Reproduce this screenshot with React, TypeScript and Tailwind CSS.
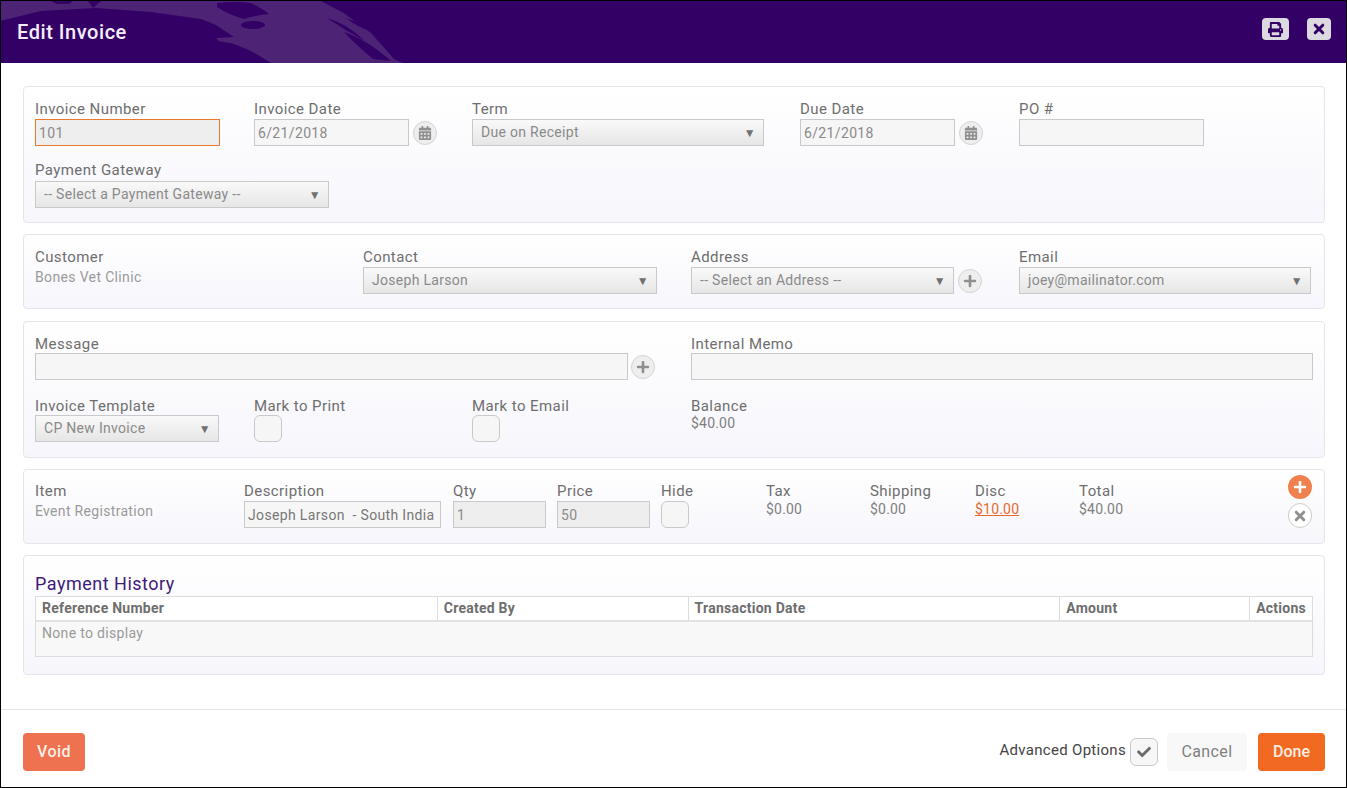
import { ReactNode } from 'react';
import { FaCalendarAlt, FaCheck, FaPlus, FaPrint } from 'react-icons/fa';

const inputClass = 'block h-[27px] border border-[#c9c9c9] px-[3px] text-[14px] tracking-[0.35px] outline-none';

function Label({ children, tight = false }: { children: ReactNode; tight?: boolean }) {
  return (
    <div
      className={`text-[15px] tracking-[0.42px] text-[#6e6e6e] ${
        tight ? 'h-5 leading-[22px]' : 'h-[21px] leading-[23px]'
      }`}
    >
      {children}
    </div>
  );
}

function Input({
  value = '',
  width,
  shade = 'bg-[#f6f6f6]',
  tone = 'text-[#8a8a8a]',
}: {
  value?: string;
  width: string;
  shade?: string;
  tone?: string;
}) {
  return <input readOnly value={value} className={`${inputClass} ${width} ${shade} ${tone}`} />;
}

function Select({ value, width }: { value: string; width: string }) {
  return (
    <div
      className={`flex h-[27px] items-center justify-between border border-[#c9c9c9] bg-gradient-to-b from-[#f9f9f9] to-[#e6e6e6] pl-2 pr-[7px] text-[14px] tracking-[0.3px] text-[#8a8a8a] ${width}`}
    >
      <span>{value}</span>
      <span className="text-[12px] text-[#707070]">▼</span>
    </div>
  );
}

function RoundIcon({ children, className = 'ml-1' }: { children: ReactNode; className?: string }) {
  return (
    <div
      className={`flex h-6 w-6 shrink-0 items-center justify-center rounded-full border border-[#d4d4d4] bg-[#eeeeee] text-[#8f8f8f] ${className}`}
    >
      {children}
    </div>
  );
}

function Panel({ height, className = '', children }: { height: string; className?: string; children: ReactNode }) {
  return (
    <section
      className={`rounded border border-[#e5e5ec] bg-gradient-to-b from-white to-[#f6f6fc] px-[11px] pt-[11px] ${height} ${className}`}
    >
      {children}
    </section>
  );
}

function Checkbox() {
  return <div className="h-[27px] w-[28px] rounded-md border border-[#c9c9c9] bg-[#f6f6f6]" />;
}

// the chunky close glyph, fa's own is too thin at this size
function CloseIcon({ size }: { size: number }) {
  return (
    <svg width={size} height={size} viewBox="0 0 12 12" fill="none" stroke="currentColor" strokeWidth="3">
      <path d="M2.2 2.2L9.8 9.8M9.8 2.2L2.2 9.8" strokeLinecap="round" />
    </svg>
  );
}

function ItemHead({ children }: { children: ReactNode }) {
  return <div className="h-5 text-[15px] leading-5 tracking-[0.42px] text-[#6e6e6e]">{children}</div>;
}

function ItemCol({ label, value, width }: { label: string; value: ReactNode; width: string }) {
  return (
    <div className={width}>
      <ItemHead>{label}</ItemHead>
      <div className="text-[14px] leading-4 tracking-[0.2px] text-[#808080]">{value}</div>
    </div>
  );
}

const historyColumns = [
  { name: 'Reference Number', width: 'w-[401px]' },
  { name: 'Created By', width: 'w-[251px]' },
  { name: 'Transaction Date', width: 'w-[372px]' },
  { name: 'Amount', width: 'w-[190px]' },
  { name: 'Actions', width: 'flex-1' },
];

export default function App() {
  return (
    <div className="flex h-[788px] w-[1347px] flex-col overflow-hidden border border-black bg-white font-['Roboto',sans-serif]">
      <header className="relative flex h-[62px] shrink-0 items-center justify-between overflow-hidden bg-[#330066] pl-4 pr-[15px]">
        <svg className="absolute left-0 top-0 blur-[0.4px]" width="420" height="62" viewBox="0 0 420 62">
          <path
            d="M-1 0H322L340 10L370 32L393 58L402 62H270L250 50L233 43L218 40L215 37L233 36L215 24L200 18L150 11L95 7L40 10L-1 20Z"
            fill="#4d2376"
          />
          <g fill="#330066">
            <path d="M50 0L72 0L68 3L56 3Z" />
            <path d="M87 0L100 0L92 7Z" />
            <path d="M216 2Q235 0 250 2Q262 8 268 13Q255 14 243 18Q228 14 216 6Z" />
            <ellipse cx="252" cy="24" rx="12" ry="4" />
            <path d="M320 0L340 0L341 11Z" />
            <path d="M326 17Q345 22 364 40Q345 30 326 17Z" />
            <path d="M343 31Q365 38 390 60L372 58Q355 44 343 31Z" />
            <path d="M345 17Q360 22 370 30Q356 26 345 17Z" />
          </g>
        </svg>
        <h1 className="relative text-[20px] font-medium tracking-[0.55px] text-[#f6eefc]">Edit Invoice</h1>
        <div className="relative mb-[6px] flex items-center gap-[18px]">
          <button className="flex h-[22px] w-[27px] items-center justify-center rounded bg-[#dcdae0] text-[15px] text-[#330066]">
            <FaPrint />
          </button>
          <button className="flex h-[22px] w-6 items-center justify-center rounded bg-[#dcdae0] text-[#330066]">
            <CloseIcon size={12} />
          </button>
        </div>
      </header>

      <main className="flex-1 pl-[22px] pr-[21px] pt-[23px]">
        <Panel height="h-[137px]">
          <div className="flex">
            <div className="w-[219px]">
              <Label>Invoice Number</Label>
              {/* focused field */}
              <div className="h-[27px] w-[185px] bg-[#e8792e] p-px">
                <div className="h-[25px] bg-[#eeeeee] px-[3px] text-[14px] leading-[26px] tracking-[0.35px] text-[#8a8a8a]">
                  101
                </div>
              </div>
            </div>
            <div className="w-[218px]">
              <Label>Invoice Date</Label>
              <div className="flex items-center">
                <Input value="6/21/2018" width="w-[155px]" />
                <RoundIcon>
                  <FaCalendarAlt className="text-[14px]" />
                </RoundIcon>
              </div>
            </div>
            <div className="w-[328px]">
              <Label>Term</Label>
              <Select value="Due on Receipt" width="w-[292px]" />
            </div>
            <div className="w-[219px]">
              <Label>Due Date</Label>
              <div className="flex items-center">
                <Input value="6/21/2018" width="w-[155px]" />
                <RoundIcon>
                  <FaCalendarAlt className="text-[14px]" />
                </RoundIcon>
              </div>
            </div>
            <div>
              <Label>PO #</Label>
              <Input width="w-[185px]" />
            </div>
          </div>
          <div className="mt-[13px]">
            <Label>Payment Gateway</Label>
            <div className="mt-px">
              <Select value="-- Select a Payment Gateway --" width="w-[294px]" />
            </div>
          </div>
        </Panel>

        <Panel height="h-[75px]" className="mt-[11px]">
          <div className="flex">
            <div className="w-[328px]">
              <Label>Customer</Label>
              <div className="text-[14px] leading-5 tracking-[0.35px] text-[#9a9a9a]">Bones Vet Clinic</div>
            </div>
            <div className="w-[328px]">
              <Label>Contact</Label>
              <Select value="Joseph Larson" width="w-[294px]" />
            </div>
            <div className="w-[328px]">
              <Label>Address</Label>
              <div className="flex items-center">
                <Select value="-- Select an Address --" width="w-[263px]" />
                <RoundIcon>
                  <FaPlus className="text-[14px]" />
                </RoundIcon>
              </div>
            </div>
            <div>
              <Label>Email</Label>
              <Select value="joey@mailinator.com" width="w-[292px]" />
            </div>
          </div>
        </Panel>

        <Panel height="h-[137px]" className="mt-3">
          <div className="flex">
            <div className="w-[656px]">
              <Label tight>Message</Label>
              <div className="flex items-center">
                <Input width="w-[593px]" />
                <RoundIcon className="ml-[3px]">
                  <FaPlus className="text-[14px]" />
                </RoundIcon>
              </div>
            </div>
            <div>
              <Label tight>Internal Memo</Label>
              <Input width="w-[622px]" />
            </div>
          </div>
          <div className="mt-[15px] flex">
            <div className="w-[219px]">
              <Label tight>Invoice Template</Label>
              <Select value="CP New Invoice" width="w-[184px]" />
            </div>
            <div className="w-[218px]">
              <Label tight>Mark to Print</Label>
              <Checkbox />
            </div>
            <div className="w-[219px]">
              <Label tight>Mark to Email</Label>
              <Checkbox />
            </div>
            <div>
              <Label tight>Balance</Label>
              <div className="text-[14px] leading-4 tracking-[0.2px] text-[#808080]">$40.00</div>
            </div>
          </div>
        </Panel>

        <Panel height="h-[75px]" className="mt-[11px]">
          <div className="flex">
            <div className="w-[209px]">
              <ItemHead>Item</ItemHead>
              <div className="text-[14px] leading-5 tracking-[0.32px] text-[#9a9a9a]">Event Registration</div>
            </div>
            <div className="w-[209px]">
              <ItemHead>Description</ItemHead>
              <Input value="Joseph Larson  - South India" width="w-[197px]" tone="text-[#777777]" />
            </div>
            <div className="w-[104px]">
              <ItemHead>Qty</ItemHead>
              <Input value="1" width="w-[93px]" shade="bg-[#eeeeee]" />
            </div>
            <div className="w-[104px]">
              <ItemHead>Price</ItemHead>
              <Input value="50" width="w-[93px]" shade="bg-[#eeeeee]" />
            </div>
            <div className="w-[105px]">
              <ItemHead>Hide</ItemHead>
              <Checkbox />
            </div>
            <ItemCol label="Tax" value="$0.00" width="w-[104px]" />
            <ItemCol label="Shipping" value="$0.00" width="w-[105px]" />
            <ItemCol
              label="Disc"
              value={<span className="text-[#e8692c] underline">$10.00</span>}
              width="w-[104px]"
            />
            <ItemCol label="Total" value="$40.00" width="w-[209px]" />
            <div className="-mt-[6px] flex flex-col gap-1">
              <div className="flex h-6 w-6 items-center justify-center rounded-full bg-[#f0814f] text-white">
                <FaPlus className="text-[14px]" />
              </div>
              <div className="flex h-[25px] w-6 items-center justify-center rounded-full border border-[#cccccc] bg-white text-[#8f8f8f]">
                <CloseIcon size={12} />
              </div>
            </div>
          </div>
        </Panel>

        <Panel height="h-[120px]" className="mt-[11px]">
          <h2 className="mt-[6px] h-[22px] text-[18px] leading-[22px] tracking-[0.5px] text-[#3f1a78]">
            Payment History
          </h2>
          <div className="mt-[1px] h-[61px] w-[1278px] border border-[#dcdcdc] bg-[#f8f8f8]">
            <div className="flex h-[25px] border-b-2 border-[#e2e2e2] bg-white text-[14px] font-bold leading-[23px] tracking-[0.25px] text-[#6e6e6e]">
              {historyColumns.map((col, i) => (
                <div key={col.name} className={`px-[6px] ${col.width} ${i > 0 ? 'border-l border-[#dcdcdc]' : ''}`}>
                  {col.name}
                </div>
              ))}
            </div>
            <div className="px-[6px] pt-[1px] text-[14px] leading-5 tracking-[0.32px] text-[#9a9a9a]">None to display</div>
          </div>
        </Panel>
      </main>

      <footer className="flex h-[78px] shrink-0 items-center justify-between border-t border-[#e5e5e5] pl-[22px] pr-[21px] pt-[6px]">
        <button className="h-[38px] w-[62px] rounded bg-[#ee7250] text-[16px] font-medium tracking-[0.5px] text-[#fdeee8]">
          Void
        </button>
        <div className="flex items-center">
          <span className="mb-[2px] text-[15px] tracking-[0.3px] text-[#444444]">Advanced Options</span>
          <div className="ml-1 flex h-[28px] w-[28px] items-center justify-center rounded-md border border-[#c9c9c9] bg-[#f6f6f6] text-[#6a6a6a]">
            <FaCheck className="text-[14px]" />
          </div>
          <button className="ml-[9px] h-[38px] w-[80px] rounded bg-[#f8f8f8] text-[16px] tracking-[0.4px] text-[#808080]">
            Cancel
          </button>
          <button className="ml-[11px] h-[38px] w-[67px] rounded bg-[#f26a21] text-[16px] font-medium text-[#fdeee2]">
            Done
          </button>
        </div>
      </footer>
    </div>
  );
}
